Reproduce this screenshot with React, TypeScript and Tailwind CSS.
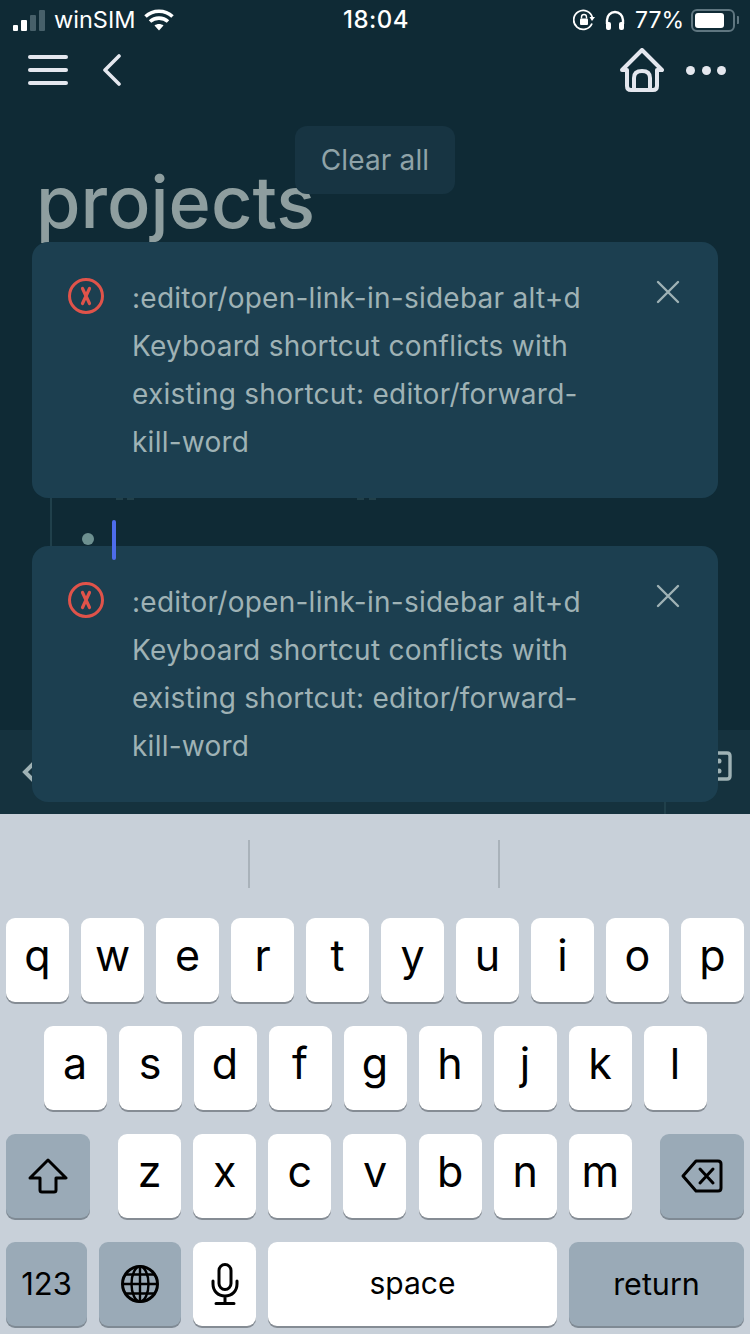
const INTER = "font-['Inter','Noto_Sans',sans-serif]";

function Key({ k, w = "w-[63px]", dark = false, cls = "text-[43px] pb-[10px]", children }: { k?: string; w?: string; dark?: boolean; cls?: string; children?: React.ReactNode }) {
  return (
    <div className={`${w} h-[84px] rounded-[9px] flex items-center justify-center text-black ${cls} ${dark ? "bg-[#9aaab7] shadow-[0_2px_0_#7f8a94]" : "bg-white shadow-[0_2px_0_#858c94]"}`}>
      {k}
      {children}
    </div>
  );
}

function Toast() {
  return (
    <div className="w-[686px] h-[256px] rounded-[16px] bg-[#1c3f50] flex pt-[32px] pl-[36px] pr-[36px]">
      <svg width="36" height="36" viewBox="0 0 36 36" fill="none" className="mt-[4px] shrink-0">
        <circle cx="18" cy="18" r="16.5" stroke="#e0534a" strokeWidth="3" />
        <path d="M14.5 10.5 L21.5 25.5 M21.5 10.5 L14.5 25.5" stroke="#e0534a" strokeWidth="3.2" strokeLinecap="round" />
      </svg>
      <div className="ml-[28px] w-[460px] whitespace-nowrap text-[28px] tracking-[0.25px] leading-[48px] text-[#9fb2b5]">
        <div>:editor/open-link-in-sidebar alt+d</div>
        <div>Keyboard shortcut conflicts with</div>
        <div>existing shortcut: editor/forward-</div>
        <div>kill-word</div>
      </div>
      <svg width="24" height="24" viewBox="0 0 24 24" fill="none" className="ml-[64px] mt-[6px] shrink-0" stroke="#9fb2b5" strokeWidth="2.4" strokeLinecap="round">
        <path d="M2 2 L22 22 M22 2 L2 22" />
      </svg>
    </div>
  );
}

function ShiftIcon() {
  return (
    <svg width="40" height="36" viewBox="0 0 40 36" fill="none" stroke="#000" strokeWidth="3" strokeLinejoin="round">
      <path d="M20 2 L38 20 H28 V32 Q28 34 26 34 H14 Q12 34 12 32 V20 H2 Z" />
    </svg>
  );
}

function BackIcon() {
  return (
    <svg width="42" height="34" viewBox="0 0 42 34" fill="none" stroke="#000" strokeWidth="3" strokeLinejoin="round" strokeLinecap="round">
      <path d="M15 2 H37 Q40 2 40 5 V29 Q40 32 37 32 H15 L2 17 Z" />
      <path d="M19 10 L32 24 M32 10 L19 24" />
    </svg>
  );
}

function GlobeIcon() {
  return (
    <svg width="38" height="38" viewBox="0 0 38 38" fill="none" stroke="#000" strokeWidth="2.4">
      <circle cx="19" cy="19" r="17.5" strokeWidth="3" />
      <ellipse cx="19" cy="19" rx="8.5" ry="17.5" />
      <path d="M19 1.5 V36.5 M1.5 19 H36.5 M4.5 9.5 H33.5 M4.5 28.5 H33.5" />
    </svg>
  );
}

function MicIcon() {
  return (
    <svg width="28" height="42" viewBox="0 0 28 42" fill="none" stroke="#000" strokeWidth="3" strokeLinecap="round">
      <rect x="8" y="1.5" width="12" height="25" rx="6" />
      <path d="M2 18 V21 C2 28 7 33 14 33 C21 33 26 28 26 21 V18 M14 33 V40 M5 40.5 H23" />
    </svg>
  );
}

function Row({ keys }: { keys: string[] }) {
  return (
    <>
      {keys.map((k) => (
        <Key key={k} k={k} />
      ))}
    </>
  );
}

export default function App() {
  return (
    <div className={`relative w-[750px] h-[1334px] overflow-hidden bg-[#0f2a35] flex flex-col ${INTER}`}>
      {/* status bar */}
      <div className="h-[40px] shrink-0 flex items-center justify-between pl-[13px] pr-[11px] text-white text-[24px]">
        <div className="flex items-center w-[300px]">
          <div className="flex items-end gap-[3px] h-[22px]">
            <div className="w-[5px] h-[6px] rounded-[1px] bg-white" />
            <div className="w-[6px] h-[11px] rounded-[1px] bg-white" />
            <div className="w-[6px] h-[16px] rounded-[1px] bg-[#47606a]" />
            <div className="w-[6px] h-[21px] rounded-[1px] bg-[#47606a]" />
          </div>
          <span className="ml-[9px] text-[23.5px]">winSIM</span>
          <svg width="30" height="22" viewBox="0 0 30 22" className="ml-[9px]" fill="none" stroke="#fff" strokeWidth="3.6">
            <path d="M1.5 7.5 C9 0.5 21 0.5 28.5 7.5" />
            <path d="M6 12.5 C11 8 19 8 24 12.5" />
            <path d="M15 21.5 L10.5 16.5 C13 14.5 17 14.5 19.5 16.5 Z" fill="#fff" stroke="none" />
          </svg>
        </div>
        <span className="font-medium tracking-[0.5px]">18:04</span>
        <div className="flex items-center justify-end w-[300px]">
          <svg width="22" height="22" viewBox="0 0 22 22" fill="none" stroke="#fff" strokeWidth="1.8">
            <path d="M19 14.5 A9.5 9.5 0 1 1 19.5 9" />
            <path d="M22 8 L19 12 L16.5 8 Z" fill="#fff" stroke="none" />
            <rect x="7" y="9.5" width="8" height="6.5" rx="1" fill="#fff" stroke="none" />
            <path d="M8.5 9.5 V8 A2.5 2.5 0 0 1 13.5 8 V9.5" strokeWidth="1.4" />
          </svg>
          <svg width="20" height="21" viewBox="0 0 20 21" fill="none" className="ml-[10px]" stroke="#fff" strokeWidth="2.4">
            <path d="M2 14 V10 A8 8 0 0 1 18 10 V14" />
            <rect x="1" y="12" width="5" height="8" rx="2" fill="#fff" stroke="none" />
            <rect x="14" y="12" width="5" height="8" rx="2" fill="#fff" stroke="none" />
          </svg>
          <span className="ml-[10px] text-[23px]">77%</span>
          <div className="ml-[7px] w-[44px] h-[23px] rounded-[6px] border-[2px] border-[#5f7680] p-[2px]">
            <div className="w-[29px] h-full rounded-[3px] bg-white" />
          </div>
          <div className="ml-[2px] w-[2px] h-[8px] rounded-r-[1px] bg-[#5f7680]" />
        </div>
      </div>

      {/* header */}
      <div className="h-[60px] shrink-0 flex items-center pl-[28px] pr-[24px]">
        <div className="flex flex-col gap-[9px]">
          <div className="w-[40px] h-[4px] rounded-full bg-[#e4e7ee]" />
          <div className="w-[40px] h-[4px] rounded-full bg-[#e4e7ee]" />
          <div className="w-[40px] h-[4px] rounded-full bg-[#e4e7ee]" />
        </div>
        <svg width="20" height="32" viewBox="0 0 20 32" fill="none" stroke="#e4e7ee" strokeWidth="3.6" strokeLinecap="round" strokeLinejoin="round" className="ml-[34px]">
          <path d="M17 2 L3 16 L17 30" />
        </svg>
        <div className="flex-1" />
        <svg width="44" height="44" viewBox="0 0 44 44" fill="none" stroke="#e4e7ee" strokeWidth="4" strokeLinejoin="round" strokeLinecap="round">
          <path d="M2 22 L22 2 L42 22 H37 V38 Q37 42 33 42 H11 Q7 42 7 38 V22 Z" />
          <path d="M14 42 V30 Q14 23 22 23 Q30 23 30 30 V42" />
        </svg>
        <div className="ml-[22px] flex gap-[6.5px]">
          <div className="w-[9px] h-[9px] rounded-full bg-[#e4e7ee]" />
          <div className="w-[9px] h-[9px] rounded-full bg-[#e4e7ee]" />
          <div className="w-[9px] h-[9px] rounded-full bg-[#e4e7ee]" />
        </div>
      </div>

      {/* page */}
      <div className="relative flex-1 min-h-0 flex flex-col">
        <div className="pl-[36px] pt-[59px] text-[72px] leading-[86px] font-medium text-[#8e9e9f]">projects</div>
        <div className="ml-[50px] w-[2px] flex-1 bg-[#20404b]" />
        <div className="absolute left-[116px] top-[398px] w-[7px] h-[1.5px] bg-[#21404a]" />
        <div className="absolute left-[127px] top-[398px] w-[7px] h-[1.5px] bg-[#21404a]" />
        <div className="absolute left-[357px] top-[398px] w-[7px] h-[1.5px] bg-[#21404a]" />
        <div className="absolute left-[369px] top-[398px] w-[7px] h-[1.5px] bg-[#21404a]" />
        <div className="absolute left-[82px] top-[433px] w-[12px] h-[12px] rounded-full bg-[#6d9090]" />
        {/* toolbar */}
        <div className="h-[84px] shrink-0 bg-[#15323e] flex items-center justify-between pl-[22px] pr-[18px]">
          <svg width="14" height="22" viewBox="0 0 14 22" fill="none" stroke="#9fb2b5" strokeWidth="4">
            <path d="M12 2 L3 11 L12 20" />
          </svg>
          <svg width="16" height="30" viewBox="0 0 16 30" fill="none" className="-mt-[13px]">
            <path d="M0 2 H11 Q14 2 14 5 V25 Q14 28 11 28 H0" stroke="#9fb2b5" strokeWidth="3.4" />
            <circle cx="3" cy="10" r="2.5" fill="#9fb2b5" />
            <circle cx="3" cy="20" r="2.5" fill="#9fb2b5" />
          </svg>
        </div>
        <div className="absolute left-[664px] top-[690px] w-[2px] h-[24px] bg-[#20404b]" />
      </div>

      {/* keyboard */}
      <div className="h-[520px] shrink-0 bg-[#c8d0d9] flex flex-col">
        <div className="h-[104px] flex items-center pl-[248px] pb-[4px]">
          <div className="w-[2px] h-[48px] bg-[#a9b2ba]" />
          <div className="w-[2px] h-[48px] bg-[#a9b2ba] ml-[248px]" />
        </div>
        <div className="flex pl-[6px] gap-[12px]">
          <Row keys={["q", "w", "e", "r", "t", "y", "u", "i", "o", "p"]} />
        </div>
        <div className="flex pl-[43.5px] gap-[12px] mt-[24px]">
          <Row keys={["a", "s", "d", "f", "g", "h", "j", "k", "l"]} />
        </div>
        <div className="flex px-[6px] mt-[24px]">
          <Key w="w-[84px]" dark cls=""><ShiftIcon /></Key>
          <div className="flex gap-[12.17px] ml-[28px]">
            <Row keys={["z", "x", "c", "v", "b", "n", "m"]} />
          </div>
          <div className="ml-[28px]">
            <Key w="w-[84px]" dark cls=""><BackIcon /></Key>
          </div>
        </div>
        <div className="flex px-[6px] gap-[12px] mt-[24px]">
          <Key w="w-[81px]" dark k="123" cls="text-[31px]" />
          <Key w="w-[82px]" dark cls=""><GlobeIcon /></Key>
          <Key cls=""><MicIcon /></Key>
          <Key w="w-[289px]" k="space" cls="text-[30px] pb-[2px]" />
          <Key w="w-[175px]" dark k="return" cls="text-[30.5px] pb-[1px]" />
        </div>
      </div>

      {/* notifications */}
      <div className="absolute left-[32px] top-[126px] w-[686px] flex flex-col items-center">
        <div className="w-[160px] h-[68px] rounded-[12px] bg-[#173442] flex items-center justify-center text-[28px] tracking-[0.15px] text-[#8fa3a8]">Clear all</div>
        <div className="mt-[48px] flex flex-col gap-[48px]">
          <Toast />
          <Toast />
        </div>
      </div>
      {/* caret, drawn over the notifications */}
      <div className="absolute left-[112px] top-[520px] w-[4px] h-[40px] rounded-full bg-[#4d6ceb]" />
    </div>
  );
}
